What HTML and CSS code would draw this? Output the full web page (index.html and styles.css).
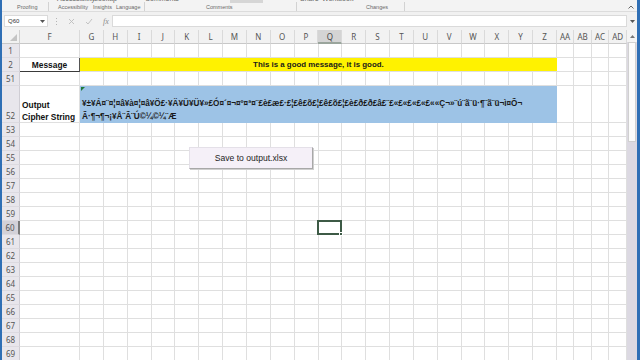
FILE: index.html
```html
<!DOCTYPE html>
<html>
<head>
<meta charset="utf-8">
<link rel="stylesheet" href="styles.css">
</head>
<body>
<div class="app">
  <div class="ribbon">
    <div class="ribbon-top">
      <span class="rt rt1">Accessibility</span>
      <span class="rt rt2">Lookup</span>
      <span class="rt rt3">Comments</span>
      <span class="rt-box"></span>
      <span class="rt rt4">Share</span>
      <span class="rt rt5">Workbook</span>
    </div>
    <div class="ribbon-labels">
      <span class="grp g1">Proofing</span>
      <span class="sep"></span>
      <span class="grp g2">Accessibility</span>
      <span class="grp g3">Insights</span>
      <span class="grp g4">Language</span>
      <span class="sep"></span>
      <span class="grp g5">Comments</span>
      <span class="sep"></span>
      <span class="grp g6">Changes</span>
      <span class="sep"></span>
      <span class="collapse">
        <svg width="6" height="4" viewBox="0 0 6 4"><path d="M0.5 3.5 L3 1 L5.5 3.5" fill="none" stroke="#666" stroke-width="1"/></svg>
      </span>
    </div>
  </div>

  <div class="fbar">
    <div class="namebox">Q60<span class="nb-dd"><svg width="5" height="3" viewBox="0 0 5 3"><path d="M0 0 L5 0 L2.5 3z" fill="#555"/></svg></span></div>
    <div class="fdots"><i></i><i></i><i></i></div>
    <div class="ficons">
      <svg width="7" height="7" viewBox="0 0 7 7"><path d="M1 1 L6 6 M6 1 L1 6" stroke="#bdbdbd" stroke-width="0.9"/></svg>
      <svg width="8" height="7" viewBox="0 0 8 7"><path d="M1 4 L3 6 L7 1" fill="none" stroke="#bdbdbd" stroke-width="0.9"/></svg>
      <span class="fx">fx</span>
    </div>
    <div class="finput"></div>
    <div class="fdd"><svg width="5" height="3" viewBox="0 0 5 3"><path d="M0 0 L5 0 L2.5 3z" fill="#555"/></svg></div>
  </div>

  <div class="sheetwrap">
    <div class="sheet">
      <div class="corner"></div>
      <div class="ch ch-f">F</div>
      <div class="ch">G</div><div class="ch">H</div><div class="ch">I</div><div class="ch">J</div>
      <div class="ch">K</div><div class="ch">L</div><div class="ch">M</div><div class="ch">N</div>
      <div class="ch">O</div><div class="ch">P</div><div class="ch ch-sel">Q</div><div class="ch">R</div>
      <div class="ch">S</div><div class="ch">T</div><div class="ch">U</div><div class="ch">V</div>
      <div class="ch">W</div><div class="ch">X</div><div class="ch">Y</div><div class="ch">Z</div>
      <div class="ch">AA</div><div class="ch">AB</div><div class="ch">AC</div><div class="ch">AD</div>

      <div class="rh">1</div>
      <div class="rh">2</div>
      <div class="rh">51</div>
      <div class="rh rh-tall">52</div>
      <div class="rh">53</div>
      <div class="rh">54</div>
      <div class="rh">55</div>
      <div class="rh">56</div>
      <div class="rh">57</div>
      <div class="rh">58</div>
      <div class="rh">59</div>
      <div class="rh rh-sel">60</div>
      <div class="rh">61</div>
      <div class="rh">62</div>
      <div class="rh">63</div>
      <div class="rh">64</div>
      <div class="rh">65</div>
      <div class="rh">66</div>
      <div class="rh">67</div>
      <div class="rh">68</div>
      <div class="rh">69</div>

      <div class="gridbg"></div>

      <div class="lbl-message">Message</div>
      <div class="message">This is a good message, it is good.</div>

      <div class="lbl-output"><span>Output</span><span>Cipher String</span></div>
      <div class="cipher">
        <span>¥±¥Á¤¨¤¦¤â¥à¤¦¤â¥Ö£·¥Ä¥Ü¥Ü¥»£Ó¤´¤¬¤º¤ª¤¨£è£æ£·£¦£ê£õ£¦£ê£õ£¦£è£ð£ð£â£¨£«£«£«£«£««Ç¬»¨ú¨ã¨ü·¶¨ã¨ü¬ì¤Õ¬</span>
        <span>Ã·¶¬¶¬¡¥Å¨Ã¨Ú©¼©¼¨Æ</span>
      </div>

      <div class="selcell"></div>

      <button class="savebtn">Save to output.xlsx</button>
    </div>
    <div class="vscroll">
      <div class="vs-up"><svg width="5" height="3" viewBox="0 0 5 3"><path d="M0 3 L5 3 L2.5 0z" fill="#777"/></svg></div>
      <div class="vs-thumb"></div>
    </div>
  </div>
</div>
</body>
</html>
```

FILE: styles.css
```css
html, body {
  margin: 0;
  padding: 0;
  background: #ffffff;
}

.app {
  width: 640px;
  height: 360px;
  box-sizing: border-box;
  overflow: hidden;
  display: flex;
  flex-direction: column;
  border-left: 2px solid #2f6fb5;
  border-right: 3px solid #2f6fb5;
  font-family: "Liberation Sans", Arial, sans-serif;
  background: #ffffff;
}

/* ---------- ribbon ---------- */
.ribbon {
  height: 12px;
  flex: none;
  background: #f3f3f3;
  border-bottom: 1px solid #dcdcdc;
  box-sizing: border-box;
  display: flex;
  flex-direction: column;
}

.ribbon-top {
  height: 3px;
  overflow: hidden;
  display: flex;
  align-items: flex-start;
  font-size: 7px;
  line-height: 7px;
  color: #666;
}

.rt {
  margin-top: -5px;
  white-space: nowrap;
  display: block;
}
.rt1 { margin-left: 55px; width: 37px; }
.rt2 { width: 51px; }
.rt3 { width: 85px; }
.rt-box {
  width: 33px;
  height: 3px;
  background: #d6d6d6;
  margin-right: 37px;
}
.rt4 { width: 22px; }
.rt5 { width: 40px; }

.ribbon-labels {
  height: 8px;
  display: flex;
  align-items: center;
  font-size: 5.5px;
  line-height: 8px;
  color: #6a6a6a;
  white-space: nowrap;
}

.grp { display: block; }
.g1 { margin-left: 15px; width: 31px; }
.g2 { margin-left: 9px; width: 35px; }
.g3 { width: 23px; }
.g4 { width: 28px; }
.g5 { margin-left: 61px; width: 90px; }
.g6 { margin-left: 69px; width: 38px; }

.sep {
  width: 1px;
  height: 9px;
  background: #d2d2d2;
  margin-top: -2px;
}

.collapse {
  margin-left: auto;
  margin-right: 3px;
  display: flex;
  align-items: center;
}

/* ---------- formula bar ---------- */
.fbar {
  height: 18px;
  flex: none;
  background: #f1f1f1;
  display: flex;
  align-items: center;
  box-sizing: border-box;
  padding-left: 2px;
}

.namebox {
  width: 44px;
  height: 12px;
  box-sizing: border-box;
  background: #fff;
  border: 1px solid #dadada;
  font-size: 6px;
  line-height: 10px;
  color: #333;
  padding-left: 3px;
  display: flex;
  justify-content: space-between;
  align-items: center;
}
.nb-dd {
  display: flex;
  padding-right: 2px;
}

.fdots {
  width: 3px;
  margin-left: 8px;
  display: flex;
  flex-direction: column;
  gap: 2px;
}
.fdots i {
  display: block;
  width: 1px;
  height: 1px;
  background: #b5b5b5;
}

.ficons {
  display: flex;
  align-items: center;
  gap: 10px;
  margin-left: 9px;
  width: 44px;
}
.fx {
  font-family: "Liberation Serif", serif;
  font-style: italic;
  font-size: 8px;
  color: #8a8a8a;
}

.finput {
  flex: 1;
  height: 12px;
  background: #fff;
  border: 1px solid #dadada;
  box-sizing: border-box;
}

.fdd {
  width: 10px;
  display: flex;
  justify-content: center;
}

/* ---------- sheet ---------- */
.sheetwrap {
  flex: 1;
  display: flex;
  min-height: 0;
  overflow: hidden;
}

.sheet {
  position: relative;
  width: 625px;
  display: grid;
  grid-template-columns: 18px 60px repeat(20, 23.85px) repeat(4, 17.5px);
  grid-template-rows: 14px 14px 14px 14px 37px repeat(17, 14px);
  font-family: "Liberation Sans", Arial, sans-serif;
}

.corner {
  grid-column: 1;
  grid-row: 1;
  background: #f2f2f2;
  border-right: 1px solid #d0d0d0;
  border-bottom: 1px solid #c8c8c8;
  box-sizing: border-box;
  position: relative;
}
.corner::after {
  content: "";
  position: absolute;
  right: 2px;
  bottom: 2px;
  width: 0;
  height: 0;
  border-left: 7px solid transparent;
  border-bottom: 7px solid #c4c4c4;
}

.ch {
  grid-row: 1;
  background: #f2f2f2;
  border-right: 1px solid #dadada;
  border-bottom: 1px solid #c8c8c8;
  box-sizing: border-box;
  font-family: "Noto Sans", "Liberation Sans", sans-serif;
  font-size: 8px;
  line-height: 13px;
  color: #555;
  text-align: center;
  overflow: hidden;
}
.ch-sel {
  background: #d4d4d4;
  border-bottom: 2px solid #9aa59c;
  color: #444;
}

.rh {
  grid-column: 1;
  background: #e8e6ec;
  border-right: 1px solid #cfcdd4;
  border-bottom: 1px solid #dcdae0;
  box-sizing: border-box;
  font-family: "Noto Sans", "Liberation Sans", sans-serif;
  font-size: 8px;
  line-height: 13px;
  color: #555;
  text-align: center;
}
.rh-tall {
  display: flex;
  align-items: flex-end;
  justify-content: center;
}
.rh-sel {
  background: #d3d1d8;
  border-right: 2px solid #7a7a7a;
}

.gridbg {
  grid-column: 2 / -1;
  grid-row: 2 / -1;
  background-image:
    linear-gradient(#dfdfdf, #dfdfdf),
    repeating-linear-gradient(to right, transparent 0 22.85px, #dfdfdf 22.85px 23.85px),
    repeating-linear-gradient(to right, transparent 0 16.5px, #dfdfdf 16.5px 17.5px),
    repeating-linear-gradient(to bottom, transparent 0 13px, #dfdfdf 13px 14px),
    linear-gradient(#dfdfdf, #dfdfdf),
    repeating-linear-gradient(to bottom, transparent 0 13px, #dfdfdf 13px 14px);
  background-size:
    1px 100%,
    477px 100%,
    70px 100%,
    100% 42px,
    100% 1px,
    100% 260px;
  background-position:
    59px 0,
    60px 0,
    537px 0,
    0 0,
    0 78px,
    0 79px;
  background-repeat: no-repeat;
}

.lbl-message {
  grid-column: 2;
  grid-row: 3;
  font-weight: bold;
  font-size: 8.4px;
  line-height: 13px;
  text-align: center;
  color: #111;
  border-bottom: 1px solid #3a3a3a;
  border-right: 1px solid #555;
  background: #fff;
  box-sizing: border-box;
  padding-top: 1px;
}

.message {
  grid-column: 3 / 23;
  grid-row: 3;
  background: #fff200;
  font-weight: bold;
  font-size: 7.9px;
  line-height: 14px;
  text-align: center;
  color: #1a1a1a;
  margin-bottom: 1px;
}

.lbl-output {
  grid-column: 2;
  grid-row: 5;
  display: flex;
  flex-direction: column;
  justify-content: flex-end;
  font-weight: bold;
  font-size: 8.4px;
  line-height: 12px;
  color: #111;
  padding-left: 2px;
  padding-bottom: 0;
}

.cipher {
  grid-column: 3 / 23;
  grid-row: 5;
  background: #9dc3e6;
  display: flex;
  flex-direction: column;
  justify-content: flex-end;
  font-weight: bold;
  font-size: 8.2px;
  line-height: 13px;
  color: #1a1a1a;
  padding-left: 2px;
  padding-bottom: 0;
  white-space: nowrap;
  overflow: hidden;
  position: relative;
}
.cipher::before {
  content: "";
  position: absolute;
  left: 1px;
  top: 1px;
  width: 0;
  height: 0;
  border-top: 4px solid #1f7a3a;
  border-right: 4px solid transparent;
}

.selcell {
  grid-column: 13;
  grid-row: 13;
  border: 2px solid #3d5a46;
  margin: -1px 0 0 -1px;
  position: relative;
}
.selcell::after {
  content: "";
  position: absolute;
  right: -3px;
  bottom: -3px;
  width: 4px;
  height: 4px;
  background: #3d5a46;
  border: 1px solid #fff;
  box-sizing: border-box;
}

.savebtn {
  position: absolute;
  left: 187px;
  top: 117px;
  width: 124px;
  height: 22px;
  margin: 0;
  padding: 0;
  background: #f5f0f8;
  border: 1px solid #e4e0e8;
  border-right-color: #a8a8a8;
  border-bottom-color: #a8a8a8;
  box-shadow: 1px 1px 0 #cfcfcf;
  font-family: "Liberation Sans", Arial, sans-serif;
  font-size: 8.6px;
  color: #1e1e1e;
  text-align: center;
}

/* ---------- scrollbar ---------- */
.vscroll {
  width: 10px;
  background: #dcd9e2;
  display: flex;
  flex-direction: column;
}
.vs-up {
  height: 12px;
  background: #f4f4f4;
  display: flex;
  align-items: center;
  justify-content: center;
}
.vs-thumb {
  height: 100px;
  background: #fbfbfb;
  border: 1px solid #d0d0d0;
  box-sizing: border-box;
  margin: 0 1px;
}
```
